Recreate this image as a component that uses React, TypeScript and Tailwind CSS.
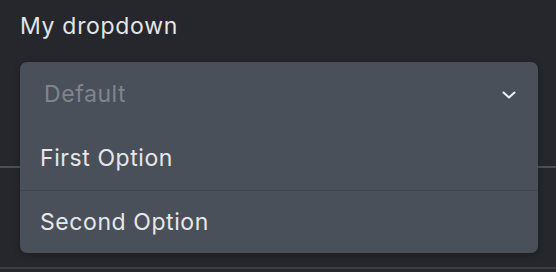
import React from "react";

export default function App() {
  return (
    <div className="relative w-[556px] h-[272px] bg-[#25272c] overflow-hidden" style={{ fontFamily: "Inter, 'Noto Sans', sans-serif" }}>
      <div className="px-5 pt-[10px]">
        <div className="text-[23px] leading-[32px] text-[#e4e5e7] tracking-[0.03em]">My dropdown</div>
      </div>
      <div className="absolute left-0 right-0 top-[166px] h-[2px] bg-[#4a505a]" />
      <div className="absolute left-0 right-0 top-[267px] h-[2px] bg-[#3a3e45]" />
      <div className="absolute left-[20px] top-[62px] w-[518px] rounded-[7px] bg-[#4a505a] flex flex-col shadow-[0_2px_6px_rgba(0,0,0,0.25)]">
        <div className="h-[65px] flex items-center justify-between pl-[24px] pr-[22px]">
          <span className="text-[23px] text-[#7f858e] tracking-[0.025em]">Default</span>
          <svg width="14" height="8" viewBox="0 0 14 8" fill="none">
            <path d="M1.5 1.5 L7 6.5 L12.5 1.5" stroke="#eef0f2" strokeWidth="2" strokeLinecap="round" strokeLinejoin="round" />
          </svg>
        </div>
        <div className="h-[64px] flex items-center pl-[20px] border-b border-[#40454d]">
          <span className="text-[23px] text-[#e6e7e9] tracking-[0.025em]">First Option</span>
        </div>
        <div className="h-[62px] flex items-center pl-[20px]">
          <span className="text-[23px] text-[#e6e7e9] tracking-[0.025em]">Second Option</span>
        </div>
      </div>
    </div>
  );
}
